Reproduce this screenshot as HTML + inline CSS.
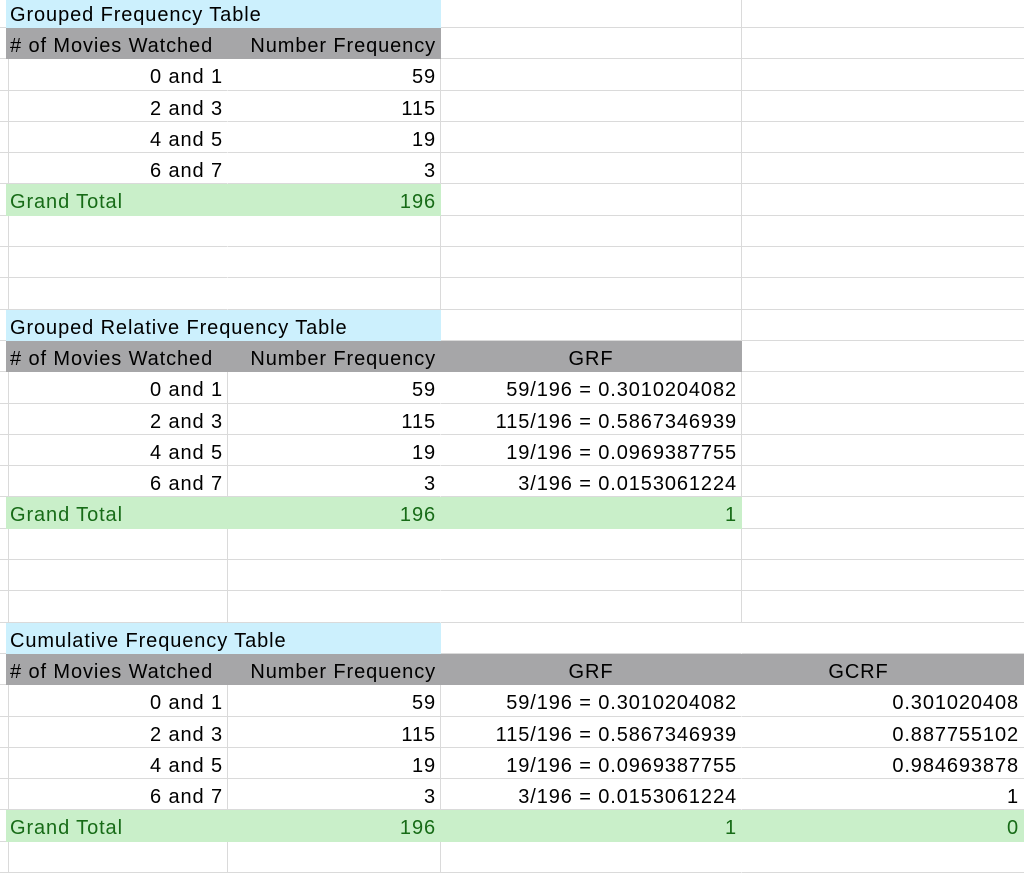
<!DOCTYPE html>
<html><head><meta charset="utf-8"><style>
*{margin:0;padding:0;box-sizing:border-box}
body{width:1024px;height:847px;overflow:hidden;background:#fff;font-family:"Liberation Sans",Arial,sans-serif;font-size:20px;letter-spacing:0.9px;color:#000;position:relative}
.g{position:absolute;left:0;top:-3.3px;display:grid;grid-template-columns:6px 222px 213px 301px 290px;grid-auto-rows:31.3px}
.g>div{border-right:1px solid #dadada;border-bottom:1px solid #dadada;line-height:30px;padding:3px 4px 0 4px;white-space:nowrap;overflow:visible}
.g>div:nth-child(5n+1){border-right-color:transparent}
.r{text-align:right}.c{text-align:center}
.b{background:#ccf0fd;border-right-color:#ccf0fd!important;border-bottom-color:#ccf0fd!important;grid-column:span 2}
.h{background:#a6a6a8;border-color:#a6a6a8!important}
.t{background:#c9efc9;color:#176b17;border-color:#c9efc9!important}
.n{border-right-color:transparent!important}
</style></head><body><div class="g">
<div></div><div class="b">Grouped Frequency Table</div><div></div><div></div>
<div></div><div class="h n"># of Movies Watched</div><div class="h r">Number Frequency</div><div></div><div></div>
<div></div><div class="r">0 and 1</div><div class="r">59</div><div></div><div></div>
<div></div><div class="r">2 and 3</div><div class="r">115</div><div></div><div></div>
<div></div><div class="r">4 and 5</div><div class="r">19</div><div></div><div></div>
<div></div><div class="r">6 and 7</div><div class="r">3</div><div></div><div></div>
<div></div><div class="t n">Grand Total</div><div class="t r">196</div><div></div><div></div>
<div></div><div></div><div></div><div></div><div></div>
<div></div><div></div><div></div><div></div><div></div>
<div></div><div></div><div></div><div></div><div></div>
<div></div><div class="b">Grouped Relative Frequency Table</div><div></div><div></div>
<div></div><div class="h n"># of Movies Watched</div><div class="h r n">Number Frequency</div><div class="h c">GRF</div><div></div>
<div></div><div class="r">0 and 1</div><div class="r">59</div><div class="r">59/196 = 0.3010204082</div><div></div>
<div></div><div class="r">2 and 3</div><div class="r">115</div><div class="r">115/196 = 0.5867346939</div><div></div>
<div></div><div class="r">4 and 5</div><div class="r">19</div><div class="r">19/196 = 0.0969387755</div><div></div>
<div></div><div class="r">6 and 7</div><div class="r">3</div><div class="r">3/196 = 0.0153061224</div><div></div>
<div></div><div class="t n">Grand Total</div><div class="t r n">196</div><div class="t r">1</div><div></div>
<div></div><div></div><div></div><div></div><div></div>
<div></div><div></div><div></div><div></div><div></div>
<div></div><div></div><div></div><div></div><div></div>
<div></div><div class="b">Cumulative Frequency Table</div><div></div><div></div>
<div></div><div class="h n"># of Movies Watched</div><div class="h r n">Number Frequency</div><div class="h c n">GRF</div><div class="h" style="padding-right:60px;text-align:center">GCRF</div>
<div></div><div class="r">0 and 1</div><div class="r">59</div><div class="r">59/196 = 0.3010204082</div><div class="r" style="padding-right:12px">0.301020408</div>
<div></div><div class="r">2 and 3</div><div class="r">115</div><div class="r">115/196 = 0.5867346939</div><div class="r" style="padding-right:12px">0.887755102</div>
<div></div><div class="r">4 and 5</div><div class="r">19</div><div class="r">19/196 = 0.0969387755</div><div class="r" style="padding-right:12px">0.984693878</div>
<div></div><div class="r">6 and 7</div><div class="r">3</div><div class="r">3/196 = 0.0153061224</div><div class="r" style="padding-right:12px">1</div>
<div></div><div class="t n">Grand Total</div><div class="t r n">196</div><div class="t r n">1</div><div class="t r" style="padding-right:12px">0</div>
<div></div><div></div><div></div><div></div><div></div>
</div></body></html>
